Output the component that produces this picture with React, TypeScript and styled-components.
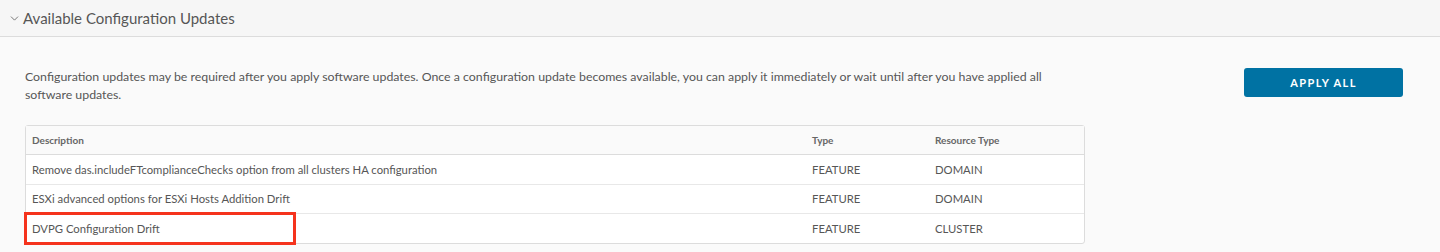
import React from "react"
import styled, { createGlobalStyle } from "styled-components"
import { ChevronDown } from "lucide-react"

interface UpdateRow {
  description: string
  type: string
  resourceType: string
  flagged?: boolean // red annotation box around the description
}

const rows: UpdateRow[] = [
  {
    description: "Remove das.includeFTcomplianceChecks option from all clusters HA configuration",
    type: "FEATURE",
    resourceType: "DOMAIN",
  },
  {
    description: "ESXi advanced options for ESXi Hosts Addition Drift",
    type: "FEATURE",
    resourceType: "DOMAIN",
  },
  {
    description: "DVPG Configuration Drift",
    type: "FEATURE",
    resourceType: "CLUSTER",
    flagged: true,
  },
]

const GlobalStyle = createGlobalStyle`
  body {
    margin: 0;
    background: #fafafa;
    font-family: Lato, "Open Sans", sans-serif;
    color: #565656;
  }
`

const App = (): JSX.Element => (
  <>
    <GlobalStyle />
    <Section>
      <SectionHeader>
        <ChevronDown size={13} strokeWidth={1.6} color="#666" />
        <Title>Available Configuration Updates</Title>
      </SectionHeader>
      <Body>
        <IntroRow>
          <Intro>
            Configuration updates may be required after you apply software updates. Once a configuration update
            becomes available, you can apply it immediately or wait until after you have applied all software
            updates.
          </Intro>
          <PrimaryButton>APPLY ALL</PrimaryButton>
        </IntroRow>
        <Grid>
          <HeadRow>
            <HeadCell>Description</HeadCell>
            <HeadCell>Type</HeadCell>
            <HeadCell>Resource Type</HeadCell>
          </HeadRow>
          {rows.map((row) => (
            <Row key={row.description}>
              <Cell>{row.description}</Cell>
              <Cell>{row.type}</Cell>
              <Cell>{row.resourceType}</Cell>
              {row.flagged && <Highlight />}
            </Row>
          ))}
        </Grid>
      </Body>
    </Section>
  </>
)

const Section = styled.div`
  width: 1440px;
  height: 252px;
  overflow: hidden;
`

const SectionHeader = styled.div`
  display: flex;
  align-items: center;
  gap: 2px;
  height: 36px;
  padding-left: 8px;
  background: #f6f6f6;
  border-bottom: 1px solid #dcdcdc;
`

const Title = styled.h2`
  margin: 0;
  font-size: 15px;
  font-weight: 400;
  color: #565656;
`

const Body = styled.div`
  padding: 31px 37px 0 25px;
`

const IntroRow = styled.div`
  display: flex;
  justify-content: space-between;
  align-items: flex-start;
`

const Intro = styled.p`
  margin: 0;
  width: 1030px;
  font-size: 12.35px;
  line-height: 18px;
  color: #565656;
`

const PrimaryButton = styled.button`
  width: 159px;
  height: 29px;
  border: none;
  border-radius: 3px;
  background: #0072a3;
  color: #fff;
  font-family: Lato, sans-serif;
  font-size: 11px;
  font-weight: 700;
  letter-spacing: 1.4px;
`

const Grid = styled.div`
  width: 1058px;
  margin-top: 21px;
  border: 1px solid #dcdcdc;
  border-radius: 3px;
  background: #fff;
`

const columns = "780px 123px 1fr"

const HeadRow = styled.div`
  display: grid;
  grid-template-columns: ${columns};
  height: 28px;
  align-items: center;
  background: #fafafa;
  border-bottom: 1px solid #dcdcdc;
`

const HeadCell = styled.div`
  padding-left: 6px;
  font-size: 10px;
  font-weight: 700;
  color: #666;
`

const Row = styled.div`
  position: relative;
  display: grid;
  grid-template-columns: ${columns};
  height: 28.5px;
  align-items: center;
  border-bottom: 1px solid #e8e8e8;

  &:last-child {
    border-bottom: none;
  }
`

const Cell = styled.div`
  padding-left: 6px;
  font-size: 11.3px;
  color: #565656;
`

const Highlight = styled.span`
  position: absolute;
  left: -2px;
  top: -2px;
  width: 266px;
  height: 27px;
  border: 3px solid #f5331d;
`

export default App
